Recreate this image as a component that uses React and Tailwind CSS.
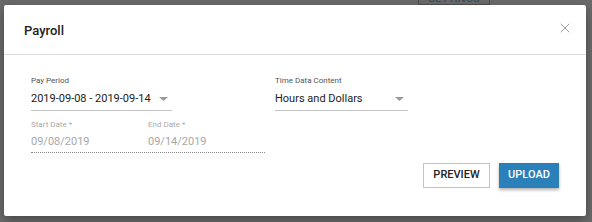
import { X } from 'lucide-react';

const Caret = () => (
  <svg className="w-[9px] h-[4px]" viewBox="0 0 9 4">
    <path d="M0 0h9L4.5 4z" fill="#9a9a9a" />
  </svg>
);

const SelectField = ({ label, value, width }) => (
  <div className={`flex flex-col ${width}`}>
    <label className="text-[8px] text-[#555] leading-none">{label}</label>
    <div className="flex items-center justify-between h-[26px] border-b border-[#c4c4c4] pr-[4px] pt-[3px]">
      <span className="text-[11px] text-[#222] whitespace-nowrap">{value}</span>
      <Caret />
    </div>
  </div>
);

const DateField = ({ label, value }) => (
  <div className="flex flex-col w-[117px]">
    <label className="text-[8px] text-[#aaa] leading-none">{label}</label>
    <span className="h-[23px] flex items-center text-[11px] text-[#a8a8a8] whitespace-nowrap pt-[3px]">{value}</span>
  </div>
);

export default function App() {
  return (
    <div className="relative w-[592px] h-[222px] bg-[#6b6b6b] overflow-hidden" style={{ fontFamily: 'Roboto, "Liberation Sans", sans-serif' }}>
      {/* button behind the overlay */}
      <div className="absolute left-[418px] top-[-14px] w-[72px] h-[19px] border border-[#4f4f4f] text-[11px] text-[#2f4a66] flex items-end justify-center leading-none">
        SETTINGS
      </div>

      <div className="absolute left-[4px] top-[5px] w-[582px] h-[211px] bg-white rounded-[2px] shadow-[0_4px_12px_rgba(0,0,0,0.35)] flex flex-col">
        <div className="h-[50px] flex items-center justify-between pl-[20px] pr-[13px] border-b border-[#dcdcdc] pt-[2px]">
          <h2 className="text-[13px] text-[#222] font-medium">Payroll</h2>
          <X className="w-[16px] h-[16px] text-[#8a8a8a] mb-[6px]" strokeWidth={1.25} />
        </div>

        <div className="flex flex-col pl-[27px] pr-[27px] pt-[22px]">
          <div className="flex gap-[103px]">
            <SelectField label="Pay Period" value="2019-09-08 - 2019-09-14" width="w-[141px]" />
            <SelectField label="Time Data Content" value="Hours and Dollars" width="w-[133px]" />
          </div>

          <div className="flex mt-[10px] w-[234px] border-b border-dotted border-[#888]">
            <DateField label="Start Date *" value="09/08/2019" />
            <DateField label="End Date *" value="09/14/2019" />
          </div>

          <div className="flex justify-end gap-[9px] mt-[10px]">
            <button className="w-[67px] h-[25px] border border-[#c4c4c4] text-[11px] font-medium text-[#222]">
              PREVIEW
            </button>
            <button className="w-[60px] h-[25px] bg-[#2b80b9] text-white text-[11px] font-medium shadow-[0_2px_3px_rgba(0,0,0,0.3)]">
              UPLOAD
            </button>
          </div>
        </div>
      </div>
    </div>
  );
}
